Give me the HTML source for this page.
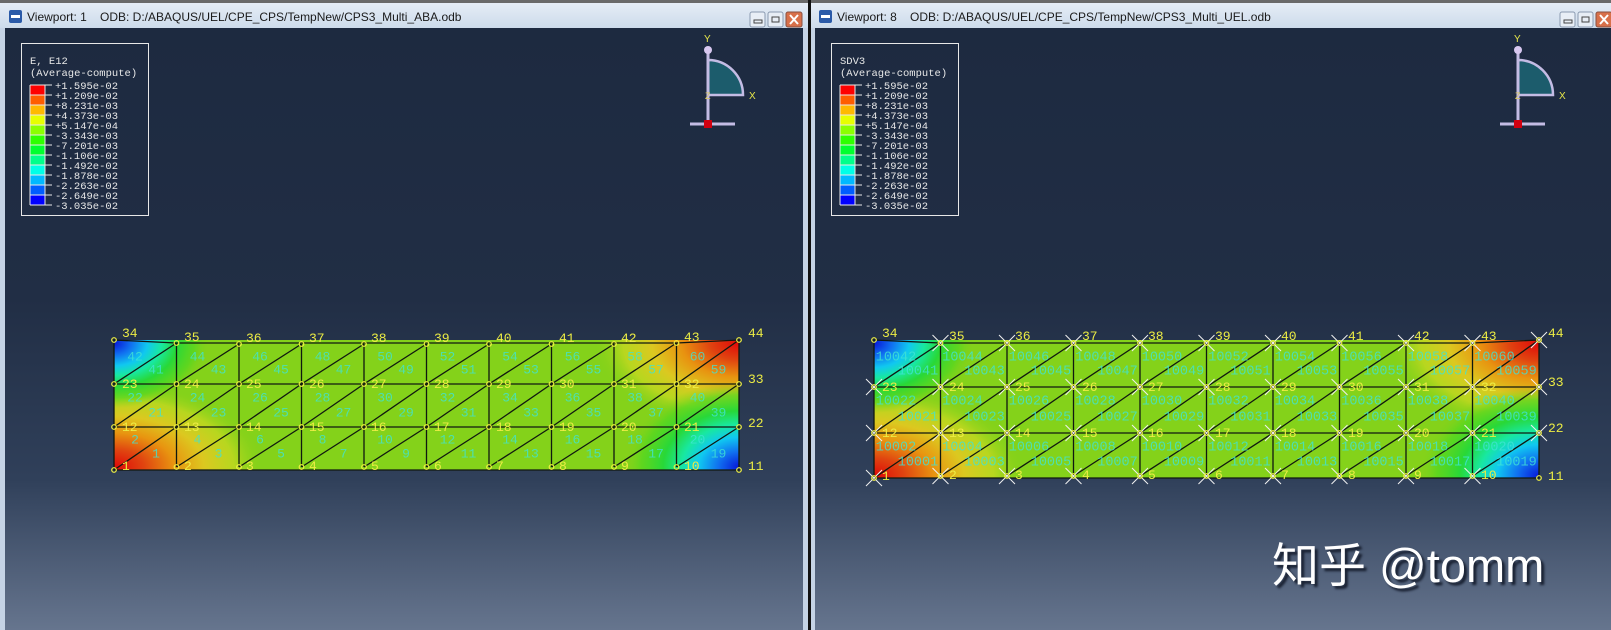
<!DOCTYPE html>
<html><head><meta charset="utf-8"><style>
html,body{margin:0;padding:0;width:1611px;height:630px;overflow:hidden;background:#c5d3e5}
svg{display:block}
.tt{font-family:"Liberation Sans",sans-serif;font-size:12px;fill:#1a1a1a}
.lg{font-family:"Liberation Mono",monospace;font-size:10.5px;fill:#e8e8e8}
.nd{font-family:"Liberation Mono",monospace;font-size:13px;fill:#ecec44}
.el{font-family:"Liberation Mono",monospace;font-size:13px;fill:#40e4d4;fill-opacity:.8;text-anchor:middle;dominant-baseline:central}
.er{font-family:"Liberation Mono",monospace;font-size:13.5px;fill:#40e4d4;fill-opacity:.8;text-anchor:middle;dominant-baseline:central}
.wm{position:absolute;left:1272px;top:527px;font-family:"Liberation Sans","Noto Sans CJK SC",sans-serif;font-size:47px;color:#fff;text-shadow:3px 3px 2px #1a2233;white-space:nowrap}
</style></head><body>
<svg width="1611" height="630" xmlns="http://www.w3.org/2000/svg">
<defs>
<linearGradient id="bg" x1="0" y1="28" x2="0" y2="630" gradientUnits="userSpaceOnUse">
<stop offset="0" stop-color="#1d2a40"/><stop offset=".45" stop-color="#212e45"/><stop offset=".75" stop-color="#30405a"/><stop offset="1" stop-color="#66758e"/></linearGradient>
<linearGradient id="tb" x1="0" y1="0" x2="0" y2="1"><stop offset="0" stop-color="#e6edf6"/><stop offset="1" stop-color="#cddbeb"/></linearGradient>
<radialGradient id="gB"><stop offset="0" stop-color="#0818d8"/><stop offset=".18" stop-color="#1070f0"/><stop offset=".35" stop-color="#10c8f0"/><stop offset=".5" stop-color="#18e8a0"/><stop offset=".66" stop-color="#28d838"/><stop offset=".85" stop-color="#50d820" stop-opacity=".7"/><stop offset="1" stop-color="#84d21a" stop-opacity="0"/></radialGradient>
<radialGradient id="gR"><stop offset="0" stop-color="#e00808"/><stop offset=".2" stop-color="#e04410"/><stop offset=".4" stop-color="#e89410"/><stop offset=".6" stop-color="#dcc820"/><stop offset=".8" stop-color="#c4d820" stop-opacity=".8"/><stop offset="1" stop-color="#84d21a" stop-opacity="0"/></radialGradient>
<clipPath id="cL"><polygon points="114,340 739,340 739,470 114,470"/></clipPath>
<clipPath id="cR"><polygon points="874,340 1539,340 1539,478 874,478"/></clipPath>
</defs>
<!-- frames -->
<rect x="0" y="0" width="1611" height="3" fill="#6a6a6a"/>
<rect x="0" y="3" width="808" height="25" fill="url(#tb)"/>
<rect x="811" y="3" width="800" height="25" fill="url(#tb)"/>
<rect x="5" y="28" width="798" height="602" fill="url(#bg)"/>
<rect x="815" y="28" width="796" height="602" fill="url(#bg)"/>
<rect x="808" y="0" width="3" height="630" fill="#111"/>
<!-- title bar L -->
<rect x="9" y="10" width="13" height="13" rx="2" fill="#2a5aa8"/><rect x="11" y="15" width="9" height="3" fill="#fff"/>
<text class="tt" x="27" y="21">Viewport: 1</text>
<text class="tt" x="100" y="21">ODB: D:/ABAQUS/UEL/CPE_CPS/TempNew/CPS3_Multi_ABA.odb</text>
<g fill="#e8eef6" stroke="#8a9ab0"><rect x="750" y="12" width="15" height="15" rx="2"/><rect x="768" y="12" width="15" height="15" rx="2"/></g>
<rect x="786" y="12" width="16" height="15" rx="2" fill="#d8704a" stroke="#8a5040"/>
<rect x="754" y="20" width="8" height="3" fill="none" stroke="#444"/><rect x="772" y="17" width="7" height="5" fill="none" stroke="#444"/>
<path d="M790 15l8 9M798 15l-8 9" stroke="#fff" stroke-width="2"/>
<!-- title bar R -->
<rect x="819" y="10" width="13" height="13" rx="2" fill="#2a5aa8"/><rect x="821" y="15" width="9" height="3" fill="#fff"/>
<text class="tt" x="837" y="21">Viewport: 8</text>
<text class="tt" x="910" y="21">ODB: D:/ABAQUS/UEL/CPE_CPS/TempNew/CPS3_Multi_UEL.odb</text>
<g fill="#e8eef6" stroke="#8a9ab0"><rect x="1560" y="12" width="15" height="15" rx="2"/><rect x="1578" y="12" width="15" height="15" rx="2"/></g>
<rect x="1596" y="12" width="16" height="15" rx="2" fill="#d8704a" stroke="#8a5040"/>
<rect x="1564" y="20" width="8" height="3" fill="none" stroke="#444"/><rect x="1582" y="17" width="7" height="5" fill="none" stroke="#444"/>
<path d="M1600 15l8 9M1608 15l-8 9" stroke="#fff" stroke-width="2"/>

<!-- legends -->
<g id="legL">
<rect x="21.5" y="43.5" width="127" height="172" fill="none" stroke="#e8e8e8"/>
<text class="lg" x="30" y="64">E, E12</text>
<text class="lg" x="30" y="76">(Average-compute)</text>
<g stroke="none">
<rect x="30" y="85" width="15" height="10" fill="#ff0000"/><rect x="30" y="95" width="15" height="10" fill="#ff5d00"/><rect x="30" y="105" width="15" height="10" fill="#ffb900"/><rect x="30" y="115" width="15" height="10" fill="#e7ff00"/><rect x="30" y="125" width="15" height="10" fill="#8bff00"/><rect x="30" y="135" width="15" height="10" fill="#2eff00"/><rect x="30" y="145" width="15" height="10" fill="#00ff2e"/><rect x="30" y="155" width="15" height="10" fill="#00ff8b"/><rect x="30" y="165" width="15" height="10" fill="#00ffe7"/><rect x="30" y="175" width="15" height="10" fill="#00b9ff"/><rect x="30" y="185" width="15" height="10" fill="#005dff"/><rect x="30" y="195" width="15" height="10" fill="#0000ff"/></g>
<path d="M30 85h22M30 95h22M30 105h22M30 115h22M30 125h22M30 135h22M30 145h22M30 155h22M30 165h22M30 175h22M30 185h22M30 195h22M30 205h22M30 85v120M45 85v120" stroke="#e8e8e8" stroke-width="1"/>
<text class="lg" x="55" y="89">+1.595e-02</text><text class="lg" x="55" y="99">+1.209e-02</text><text class="lg" x="55" y="109">+8.231e-03</text><text class="lg" x="55" y="119">+4.373e-03</text><text class="lg" x="55" y="129">+5.147e-04</text><text class="lg" x="55" y="139">-3.343e-03</text><text class="lg" x="55" y="149">-7.201e-03</text><text class="lg" x="55" y="159">-1.106e-02</text><text class="lg" x="55" y="169">-1.492e-02</text><text class="lg" x="55" y="179">-1.878e-02</text><text class="lg" x="55" y="189">-2.263e-02</text><text class="lg" x="55" y="199">-2.649e-02</text><text class="lg" x="55" y="209">-3.035e-02</text>
</g>
<g transform="translate(810,0)">
<rect x="21.5" y="43.5" width="127" height="172" fill="none" stroke="#e8e8e8"/>
<text class="lg" x="30" y="64">SDV3</text>
<text class="lg" x="30" y="76">(Average-compute)</text>
<rect x="30" y="85" width="15" height="10" fill="#ff0000"/><rect x="30" y="95" width="15" height="10" fill="#ff5d00"/><rect x="30" y="105" width="15" height="10" fill="#ffb900"/><rect x="30" y="115" width="15" height="10" fill="#e7ff00"/><rect x="30" y="125" width="15" height="10" fill="#8bff00"/><rect x="30" y="135" width="15" height="10" fill="#2eff00"/><rect x="30" y="145" width="15" height="10" fill="#00ff2e"/><rect x="30" y="155" width="15" height="10" fill="#00ff8b"/><rect x="30" y="165" width="15" height="10" fill="#00ffe7"/><rect x="30" y="175" width="15" height="10" fill="#00b9ff"/><rect x="30" y="185" width="15" height="10" fill="#005dff"/><rect x="30" y="195" width="15" height="10" fill="#0000ff"/>
<path d="M30 85h22M30 95h22M30 105h22M30 115h22M30 125h22M30 135h22M30 145h22M30 155h22M30 165h22M30 175h22M30 185h22M30 195h22M30 205h22M30 85v120M45 85v120" stroke="#e8e8e8" stroke-width="1"/>
<text class="lg" x="55" y="89">+1.595e-02</text><text class="lg" x="55" y="99">+1.209e-02</text><text class="lg" x="55" y="109">+8.231e-03</text><text class="lg" x="55" y="119">+4.373e-03</text><text class="lg" x="55" y="129">+5.147e-04</text><text class="lg" x="55" y="139">-3.343e-03</text><text class="lg" x="55" y="149">-7.201e-03</text><text class="lg" x="55" y="159">-1.106e-02</text><text class="lg" x="55" y="169">-1.492e-02</text><text class="lg" x="55" y="179">-1.878e-02</text><text class="lg" x="55" y="189">-2.263e-02</text><text class="lg" x="55" y="199">-2.649e-02</text><text class="lg" x="55" y="209">-3.035e-02</text>
</g>

<!-- triads -->
<g id="triad">
<path d="M708 95V60A35 35 0 0 1 743 95Z" fill="#1c5c6c" stroke="#c4bce4" stroke-width="2.5"/>
<path d="M708 50V124M690 124H735" stroke="#c4bce4" stroke-width="3"/>
<circle cx="708" cy="50" r="4" fill="#d8c8f0"/>
<rect x="704" y="120" width="8" height="8" fill="#d00010"/>
<text x="704" y="42" font-family="Liberation Sans" font-size="10" fill="#e8e84a">Y</text>
<text x="749" y="99" font-family="Liberation Sans" font-size="10" fill="#e8e84a">X</text>
<text x="705" y="99" font-family="Liberation Sans" font-size="9" fill="#d8c860">Z</text>
</g>
<g transform="translate(810,0)">
<path d="M708 95V60A35 35 0 0 1 743 95Z" fill="#1c5c6c" stroke="#c4bce4" stroke-width="2.5"/>
<path d="M708 50V124M690 124H735" stroke="#c4bce4" stroke-width="3"/>
<circle cx="708" cy="50" r="4" fill="#d8c8f0"/>
<rect x="704" y="120" width="8" height="8" fill="#d00010"/>
<text x="704" y="42" font-family="Liberation Sans" font-size="10" fill="#e8e84a">Y</text>
<text x="749" y="99" font-family="Liberation Sans" font-size="10" fill="#e8e84a">X</text>
<text x="705" y="99" font-family="Liberation Sans" font-size="9" fill="#d8c860">Z</text>
</g>

<!-- LEFT MESH -->
<g clip-path="url(#cL)">
<rect x="114" y="340" width="625" height="130" fill="#84d21a"/>
<ellipse cx="114" cy="467" rx="150" ry="85" fill="url(#gR)"/>
<ellipse cx="739" cy="343" rx="145" ry="85" fill="url(#gR)"/>
<ellipse cx="114" cy="343" rx="95" ry="65" fill="url(#gB)"/>
<ellipse cx="739" cy="467" rx="115" ry="85" fill="url(#gB)"/>
</g>
<path d="M114 340L176.5 343L676.5 343L739 340L739 470L114 470ZM176.5 343V467M239 344V467M301.5 344V467M364 344V467M426.5 344V467M489 344V467M551.5 344V467M614 344V467M676.5 343V467M114 384H739M114 427H739
M114 470L176.5 427M176.5 467L239 427M239 467L301.5 427M301.5 467L364 427M364 467L426.5 427M426.5 467L489 427M489 467L551.5 427M551.5 467L614 427M614 467L676.5 427M676.5 467L739 427
M114 427L176.5 384M176.5 427L239 384M239 427L301.5 384M301.5 427L364 384M364 427L426.5 384M426.5 427L489 384M489 427L551.5 384M551.5 427L614 384M614 427L676.5 384M676.5 427L739 384
M114 384L176.5 343M176.5 384L239 344M239 384L301.5 344M301.5 384L364 344M364 384L426.5 344M426.5 384L489 344M489 384L551.5 344M551.5 384L614 344M614 384L676.5 343M676.5 384L739 340" fill="none" stroke="#101810" stroke-width="1.3"/>
<g class="el">
<text x="135" y="357">42</text><text x="197.5" y="357">44</text><text x="260" y="357">46</text><text x="322.5" y="357">48</text><text x="385" y="357">50</text><text x="447.5" y="357">52</text><text x="510" y="357">54</text><text x="572.5" y="357">56</text><text x="635" y="357">58</text><text x="697.5" y="357">60</text>
<text x="156" y="370">41</text><text x="218.5" y="370">43</text><text x="281" y="370">45</text><text x="343.5" y="370">47</text><text x="406" y="370">49</text><text x="468.5" y="370">51</text><text x="531" y="370">53</text><text x="593.5" y="370">55</text><text x="656" y="370">57</text><text x="718.5" y="370">59</text>
<text x="135" y="398">22</text><text x="197.5" y="398">24</text><text x="260" y="398">26</text><text x="322.5" y="398">28</text><text x="385" y="398">30</text><text x="447.5" y="398">32</text><text x="510" y="398">34</text><text x="572.5" y="398">36</text><text x="635" y="398">38</text><text x="697.5" y="398">40</text>
<text x="156" y="413">21</text><text x="218.5" y="413">23</text><text x="281" y="413">25</text><text x="343.5" y="413">27</text><text x="406" y="413">29</text><text x="468.5" y="413">31</text><text x="531" y="413">33</text><text x="593.5" y="413">35</text><text x="656" y="413">37</text><text x="718.5" y="413">39</text>
<text x="135" y="440">2</text><text x="197.5" y="440">4</text><text x="260" y="440">6</text><text x="322.5" y="440">8</text><text x="385" y="440">10</text><text x="447.5" y="440">12</text><text x="510" y="440">14</text><text x="572.5" y="440">16</text><text x="635" y="440">18</text><text x="697.5" y="440">20</text>
<text x="156" y="454">1</text><text x="218.5" y="454">3</text><text x="281" y="454">5</text><text x="343.5" y="454">7</text><text x="406" y="454">9</text><text x="468.5" y="454">11</text><text x="531" y="454">13</text><text x="593.5" y="454">15</text><text x="656" y="454">17</text><text x="718.5" y="454">19</text>
</g>
<g fill="none" stroke="#f0f040" stroke-width="1.2">
<circle cx="114" cy="340" r="2.3"/><circle cx="176.5" cy="343" r="2.3"/><circle cx="239" cy="344" r="2.3"/><circle cx="301.5" cy="344" r="2.3"/><circle cx="364" cy="344" r="2.3"/><circle cx="426.5" cy="344" r="2.3"/><circle cx="489" cy="344" r="2.3"/><circle cx="551.5" cy="344" r="2.3"/><circle cx="614" cy="344" r="2.3"/><circle cx="676.5" cy="343" r="2.3"/><circle cx="739" cy="340" r="2.3"/>
<circle cx="114" cy="384" r="2.3"/><circle cx="176.5" cy="384" r="2.3"/><circle cx="239" cy="384" r="2.3"/><circle cx="301.5" cy="384" r="2.3"/><circle cx="364" cy="384" r="2.3"/><circle cx="426.5" cy="384" r="2.3"/><circle cx="489" cy="384" r="2.3"/><circle cx="551.5" cy="384" r="2.3"/><circle cx="614" cy="384" r="2.3"/><circle cx="676.5" cy="384" r="2.3"/><circle cx="739" cy="384" r="2.3"/>
<circle cx="114" cy="427" r="2.3"/><circle cx="176.5" cy="427" r="2.3"/><circle cx="239" cy="427" r="2.3"/><circle cx="301.5" cy="427" r="2.3"/><circle cx="364" cy="427" r="2.3"/><circle cx="426.5" cy="427" r="2.3"/><circle cx="489" cy="427" r="2.3"/><circle cx="551.5" cy="427" r="2.3"/><circle cx="614" cy="427" r="2.3"/><circle cx="676.5" cy="427" r="2.3"/><circle cx="739" cy="427" r="2.3"/>
<circle cx="114" cy="470" r="2.3"/><circle cx="176.5" cy="467" r="2.3"/><circle cx="239" cy="467" r="2.3"/><circle cx="301.5" cy="467" r="2.3"/><circle cx="364" cy="467" r="2.3"/><circle cx="426.5" cy="467" r="2.3"/><circle cx="489" cy="467" r="2.3"/><circle cx="551.5" cy="467" r="2.3"/><circle cx="614" cy="467" r="2.3"/><circle cx="676.5" cy="467" r="2.3"/><circle cx="739" cy="470" r="2.3"/>
</g>
<g class="nd">
<text x="122" y="337">34</text><text x="184" y="341">35</text><text x="246" y="342">36</text><text x="309" y="342">37</text><text x="371" y="342">38</text><text x="434" y="342">39</text><text x="496" y="342">40</text><text x="559" y="342">41</text><text x="621" y="342">42</text><text x="684" y="341">43</text><text x="748" y="337">44</text>
<text x="122" y="388">23</text><text x="184" y="388">24</text><text x="246" y="388">25</text><text x="309" y="388">26</text><text x="371" y="388">27</text><text x="434" y="388">28</text><text x="496" y="388">29</text><text x="559" y="388">30</text><text x="621" y="388">31</text><text x="684" y="388">32</text><text x="748" y="383">33</text>
<text x="122" y="431">12</text><text x="184" y="431">13</text><text x="246" y="431">14</text><text x="309" y="431">15</text><text x="371" y="431">16</text><text x="434" y="431">17</text><text x="496" y="431">18</text><text x="559" y="431">19</text><text x="621" y="431">20</text><text x="684" y="431">21</text><text x="748" y="427">22</text>
<text x="122" y="470">1</text><text x="184" y="470">2</text><text x="246" y="470">3</text><text x="309" y="470">4</text><text x="371" y="470">5</text><text x="434" y="470">6</text><text x="496" y="470">7</text><text x="559" y="470">8</text><text x="621" y="470">9</text><text x="684" y="470">10</text><text x="748" y="470">11</text>
</g>

<!-- RIGHT MESH -->
<g clip-path="url(#cR)">
<rect x="874" y="340" width="665" height="138" fill="#84d21a"/>
<ellipse cx="874" cy="476" rx="150" ry="90" fill="url(#gR)"/>
<ellipse cx="1539" cy="343" rx="150" ry="90" fill="url(#gR)"/>
<ellipse cx="874" cy="343" rx="100" ry="70" fill="url(#gB)"/>
<ellipse cx="1539" cy="476" rx="120" ry="90" fill="url(#gB)"/>
</g>
<path d="M874 340L940.5 343L1472.5 343L1539 340L1539 478L874 478ZM940.5 343V476M1007 343V476M1073.5 343V476M1140 343V476M1206.5 343V476M1273 343V476M1339.5 343V476M1406 343V476M1472.5 343V476M874 387H1539M874 433H1539
M874 478L940.5 433M940.5 476L1007 433M1007 476L1073.5 433M1073.5 476L1140 433M1140 476L1206.5 433M1206.5 476L1273 433M1273 476L1339.5 433M1339.5 476L1406 433M1406 476L1472.5 433M1472.5 476L1539 433
M874 433L940.5 387M940.5 433L1007 387M1007 433L1073.5 387M1073.5 433L1140 387M1140 433L1206.5 387M1206.5 433L1273 387M1273 433L1339.5 387M1339.5 433L1406 387M1406 433L1472.5 387M1472.5 433L1539 387
M874 387L940.5 343M940.5 387L1007 343M1007 387L1073.5 343M1073.5 387L1140 343M1140 387L1206.5 343M1206.5 387L1273 343M1273 387L1339.5 343M1339.5 387L1406 343M1406 387L1472.5 343M1472.5 387L1539 340" fill="none" stroke="#101810" stroke-width="1.3"/>
<g class="er">
<text x="896" y="358">10042</text><text x="962.5" y="358">10044</text><text x="1029" y="358">10046</text><text x="1095.5" y="358">10048</text><text x="1162" y="358">10050</text><text x="1228.5" y="358">10052</text><text x="1295" y="358">10054</text><text x="1361.5" y="358">10056</text><text x="1428" y="358">10058</text><text x="1494.5" y="358">10060</text>
<text x="918" y="372">10041</text><text x="984.5" y="372">10043</text><text x="1051" y="372">10045</text><text x="1117.5" y="372">10047</text><text x="1184" y="372">10049</text><text x="1250.5" y="372">10051</text><text x="1317" y="372">10053</text><text x="1383.5" y="372">10055</text><text x="1450" y="372">10057</text><text x="1516.5" y="372">10059</text>
<text x="896" y="402">10022</text><text x="962.5" y="402">10024</text><text x="1029" y="402">10026</text><text x="1095.5" y="402">10028</text><text x="1162" y="402">10030</text><text x="1228.5" y="402">10032</text><text x="1295" y="402">10034</text><text x="1361.5" y="402">10036</text><text x="1428" y="402">10038</text><text x="1494.5" y="402">10040</text>
<text x="918" y="418">10021</text><text x="984.5" y="418">10023</text><text x="1051" y="418">10025</text><text x="1117.5" y="418">10027</text><text x="1184" y="418">10029</text><text x="1250.5" y="418">10031</text><text x="1317" y="418">10033</text><text x="1383.5" y="418">10035</text><text x="1450" y="418">10037</text><text x="1516.5" y="418">10039</text>
<text x="896" y="448">10002</text><text x="962.5" y="448">10004</text><text x="1029" y="448">10006</text><text x="1095.5" y="448">10008</text><text x="1162" y="448">10010</text><text x="1228.5" y="448">10012</text><text x="1295" y="448">10014</text><text x="1361.5" y="448">10016</text><text x="1428" y="448">10018</text><text x="1494.5" y="448">10020</text>
<text x="918" y="463">10001</text><text x="984.5" y="463">10003</text><text x="1051" y="463">10005</text><text x="1117.5" y="463">10007</text><text x="1184" y="463">10009</text><text x="1250.5" y="463">10011</text><text x="1317" y="463">10013</text><text x="1383.5" y="463">10015</text><text x="1450" y="463">10017</text><text x="1516.5" y="463">10019</text>
</g>
<g stroke="#f0f0f0" stroke-width="1">
<path d="M932.5 335l16 16M948.5 335l-16 16M999 335l16 16M1015 335l-16 16M1065.5 335l16 16M1081.5 335l-16 16M1132 335l16 16M1148 335l-16 16M1198.5 335l16 16M1214.5 335l-16 16M1265 335l16 16M1281 335l-16 16M1331.5 335l16 16M1347.5 335l-16 16M1398 335l16 16M1414 335l-16 16M1464.5 335l16 16M1480.5 335l-16 16M1531 332l16 16M1547 332l-16 16"/>
<path d="M866 379l16 16M882 379l-16 16M932.5 379l16 16M948.5 379l-16 16M999 379l16 16M1015 379l-16 16M1065.5 379l16 16M1081.5 379l-16 16M1132 379l16 16M1148 379l-16 16M1198.5 379l16 16M1214.5 379l-16 16M1265 379l16 16M1281 379l-16 16M1331.5 379l16 16M1347.5 379l-16 16M1398 379l16 16M1414 379l-16 16M1464.5 379l16 16M1480.5 379l-16 16M1531 379l16 16M1547 379l-16 16"/>
<path d="M866 425l16 16M882 425l-16 16M932.5 425l16 16M948.5 425l-16 16M999 425l16 16M1015 425l-16 16M1065.5 425l16 16M1081.5 425l-16 16M1132 425l16 16M1148 425l-16 16M1198.5 425l16 16M1214.5 425l-16 16M1265 425l16 16M1281 425l-16 16M1331.5 425l16 16M1347.5 425l-16 16M1398 425l16 16M1414 425l-16 16M1464.5 425l16 16M1480.5 425l-16 16M1531 425l16 16M1547 425l-16 16"/>
<path d="M866 470l16 16M882 470l-16 16M932.5 468l16 16M948.5 468l-16 16M999 468l16 16M1015 468l-16 16M1065.5 468l16 16M1081.5 468l-16 16M1132 468l16 16M1148 468l-16 16M1198.5 468l16 16M1214.5 468l-16 16M1265 468l16 16M1281 468l-16 16M1331.5 468l16 16M1347.5 468l-16 16M1398 468l16 16M1414 468l-16 16M1464.5 468l16 16M1480.5 468l-16 16"/>
</g>
<g fill="none" stroke="#f0f040" stroke-width="1.2">
<circle cx="874" cy="340" r="2.3"/><circle cx="940.5" cy="343" r="2.3"/><circle cx="1007" cy="343" r="2.3"/><circle cx="1073.5" cy="343" r="2.3"/><circle cx="1140" cy="343" r="2.3"/><circle cx="1206.5" cy="343" r="2.3"/><circle cx="1273" cy="343" r="2.3"/><circle cx="1339.5" cy="343" r="2.3"/><circle cx="1406" cy="343" r="2.3"/><circle cx="1472.5" cy="343" r="2.3"/><circle cx="1539" cy="340" r="2.3"/>
<circle cx="874" cy="387" r="2.3"/><circle cx="940.5" cy="387" r="2.3"/><circle cx="1007" cy="387" r="2.3"/><circle cx="1073.5" cy="387" r="2.3"/><circle cx="1140" cy="387" r="2.3"/><circle cx="1206.5" cy="387" r="2.3"/><circle cx="1273" cy="387" r="2.3"/><circle cx="1339.5" cy="387" r="2.3"/><circle cx="1406" cy="387" r="2.3"/><circle cx="1472.5" cy="387" r="2.3"/><circle cx="1539" cy="387" r="2.3"/>
<circle cx="874" cy="433" r="2.3"/><circle cx="940.5" cy="433" r="2.3"/><circle cx="1007" cy="433" r="2.3"/><circle cx="1073.5" cy="433" r="2.3"/><circle cx="1140" cy="433" r="2.3"/><circle cx="1206.5" cy="433" r="2.3"/><circle cx="1273" cy="433" r="2.3"/><circle cx="1339.5" cy="433" r="2.3"/><circle cx="1406" cy="433" r="2.3"/><circle cx="1472.5" cy="433" r="2.3"/><circle cx="1539" cy="433" r="2.3"/>
<circle cx="874" cy="478" r="2.3"/><circle cx="940.5" cy="476" r="2.3"/><circle cx="1007" cy="476" r="2.3"/><circle cx="1073.5" cy="476" r="2.3"/><circle cx="1140" cy="476" r="2.3"/><circle cx="1206.5" cy="476" r="2.3"/><circle cx="1273" cy="476" r="2.3"/><circle cx="1339.5" cy="476" r="2.3"/><circle cx="1406" cy="476" r="2.3"/><circle cx="1472.5" cy="476" r="2.3"/><circle cx="1539" cy="478" r="2.3"/>
</g>
<g class="nd">
<text x="882" y="337">34</text><text x="949" y="340">35</text><text x="1015" y="340">36</text><text x="1082" y="340">37</text><text x="1148" y="340">38</text><text x="1215" y="340">39</text><text x="1281" y="340">40</text><text x="1348" y="340">41</text><text x="1414" y="340">42</text><text x="1481" y="340">43</text><text x="1548" y="337">44</text>
<text x="882" y="391">23</text><text x="949" y="391">24</text><text x="1015" y="391">25</text><text x="1082" y="391">26</text><text x="1148" y="391">27</text><text x="1215" y="391">28</text><text x="1281" y="391">29</text><text x="1348" y="391">30</text><text x="1414" y="391">31</text><text x="1481" y="391">32</text><text x="1548" y="386">33</text>
<text x="882" y="437">12</text><text x="949" y="437">13</text><text x="1015" y="437">14</text><text x="1082" y="437">15</text><text x="1148" y="437">16</text><text x="1215" y="437">17</text><text x="1281" y="437">18</text><text x="1348" y="437">19</text><text x="1414" y="437">20</text><text x="1481" y="437">21</text><text x="1548" y="432">22</text>
<text x="882" y="480">1</text><text x="949" y="479">2</text><text x="1015" y="479">3</text><text x="1082" y="479">4</text><text x="1148" y="479">5</text><text x="1215" y="479">6</text><text x="1281" y="479">7</text><text x="1348" y="479">8</text><text x="1414" y="479">9</text><text x="1481" y="479">10</text><text x="1548" y="480">11</text>
</g>
</svg>
<div class="wm">知乎 @tomm</div>
</body></html>
